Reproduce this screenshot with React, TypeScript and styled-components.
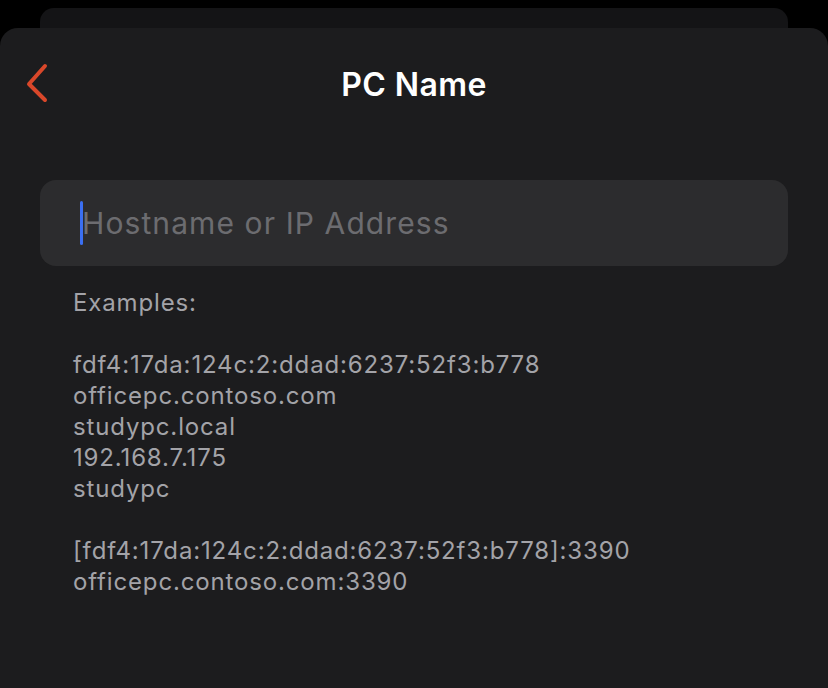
import React from "react";
import styled, { createGlobalStyle } from "styled-components";

const Global = createGlobalStyle`
  html, body { margin: 0; padding: 0; background: #000; }
  body { font-family: Inter, "Noto Sans", sans-serif; -webkit-font-smoothing: antialiased; }
`;

const Page = styled.div`
  width: 828px;
  height: 688px;
  background: #000;
  padding-top: 8px;
  box-sizing: border-box;
  display: flex;
  flex-direction: column;
  overflow: hidden;
`;

const BackSheet = styled.div`
  margin: 0 40px;
  height: 20px;
  background: #141416;
  border-radius: 14px 14px 0 0;
  flex: none;
`;

const Sheet = styled.div`
  flex: 1;
  background: #1c1c1e;
  border-radius: 18px 18px 0 0;
  display: flex;
  flex-direction: column;
  padding: 0 40px;
`;

const Header = styled.div`
  height: 112px;
  display: flex;
  align-items: center;
  justify-content: center;
  position: relative;
`;

const BackButton = styled.button`
  position: absolute;
  left: -16px;
  top: 50%;
  transform: translateY(-50%);
  background: none;
  border: none;
  padding: 0;
  width: 30px;
  height: 44px;
  display: flex;
  align-items: center;
  justify-content: center;
`;

const Title = styled.h1`
  margin: 0;
  font-size: 32px;
  font-weight: 600;
  color: #fff;
  letter-spacing: 0.4px;
`;

const InputBox = styled.div`
  margin-top: 40px;
  height: 86px;
  background: #2c2c2e;
  border-radius: 16px;
  display: flex;
  align-items: center;
  padding-left: 40px;
`;

const Caret = styled.span`
  width: 3px;
  height: 44px;
  border-radius: 2px;
  background: #3b6ff2;
  flex: none;
`;

const Placeholder = styled.span`
  font-size: 30px;
  color: #6c6c70;
  letter-spacing: 1.1px;
  margin-left: -1px;
`;

const Examples = styled.div`
  margin-top: 21px;
  padding-left: 33px;
  font-size: 24px;
  line-height: 31px;
  letter-spacing: 0.85px;
  color: #a3a3a8;
  white-space: pre;
`;

const Line = styled.div`
  height: 31px;
`;

const lines = [
  "Examples:",
  "",
  "fdf4:17da:124c:2:ddad:6237:52f3:b778",
  "officepc.contoso.com",
  "studypc.local",
  "192.168.7.175",
  "studypc",
  "",
  "[fdf4:17da:124c:2:ddad:6237:52f3:b778]:3390",
  "officepc.contoso.com:3390",
];

export default function App() {
  return (
    <Page>
      <Global />
      <BackSheet />
      <Sheet>
        <Header>
          <BackButton aria-label="Back">
            <svg width="30" height="44" viewBox="0 0 30 44">
              <path
                d="M21 7 L5 25 L21 41"
                fill="none"
                stroke="#d9472a"
                strokeWidth="4"
                strokeLinecap="round"
                strokeLinejoin="round"
                transform="translate(0,-3)"
              />
            </svg>
          </BackButton>
          <Title>PC Name</Title>
        </Header>
        <InputBox>
          <Caret />
          <Placeholder>Hostname or IP Address</Placeholder>
        </InputBox>
        <Examples>
          {lines.map((l, i) => (
            <Line key={i}>{l}</Line>
          ))}
        </Examples>
      </Sheet>
    </Page>
  );
}
